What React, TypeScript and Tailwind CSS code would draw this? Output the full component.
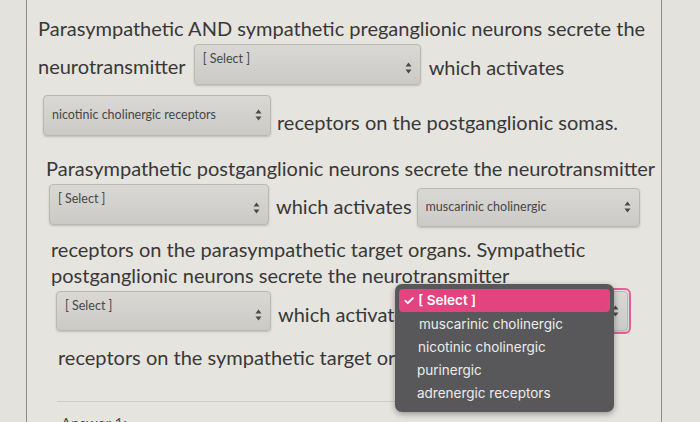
import React from "react";

const SANS = { fontFamily: "Lato, 'Open Sans', sans-serif" };

function Arrows() {
  return (
    <svg width="7" height="12" viewBox="0 0 7 12" className="shrink-0">
      <path d="M3.5 0.5 L6.5 4.5 L0.5 4.5 Z" fill="#4a4a4a" />
      <path d="M3.5 11.5 L6.5 7.5 L0.5 7.5 Z" fill="#4a4a4a" />
    </svg>
  );
}

type BoxProps = {
  label: string;
  w: string;
  h?: string;
  top?: boolean;
};

// grey native-looking select box
function SelectBox({ label, w, h = "h-[41px]", top = false }: BoxProps) {
  return (
    <div
      className={`${w} ${h} shrink-0 rounded-[4px] border border-[#b9b8b3] bg-gradient-to-b from-[#d9d8d4] to-[#cbcac6] shadow-[0_1px_2px_rgba(0,0,0,0.18)] flex justify-between pl-2 pr-2 ${
        top ? "items-start pt-[8px]" : "items-center"
      }`}
    >
      <span className="text-[12.5px] text-[#474747] leading-none">{label}</span>
      <span className={top ? "self-center" : ""}>
        <Arrows />
      </span>
    </div>
  );
}

export default function App() {
  return (
    <div
      className="w-[700px] h-[422px] overflow-hidden bg-[#e4e2dc] text-[#383838]"
      style={SANS}
    >
      <div className="ml-[26px] w-[636px] h-full border-l border-r border-[#8d8b86] bg-[#e6e4de]">
        <div className="flex flex-col text-[20px]">
          {/* line 1 */}
          <div className="ml-[11px] mt-[13px] h-[30px] leading-[30px] whitespace-nowrap">
            Parasympathetic AND sympathetic preganglionic neurons secrete the
          </div>

          {/* line 2 */}
          <div className="ml-[11px] h-[42px] flex items-center gap-[8px] whitespace-nowrap">
            <span className="mt-[4px]">neurotransmitter</span>
            <SelectBox label="[ Select ]" w="w-[227px]" top />
            <span className="mt-[6px]">which activates</span>
          </div>

          {/* line 3 */}
          <div className="ml-[16px] mt-[10px] h-[40px] flex items-center gap-[6px] whitespace-nowrap">
            <SelectBox label="nicotinic cholinergic receptors" w="w-[228px]" />
            <span className="mt-[14px]">receptors on the postganglionic somas.</span>
          </div>

          {/* line 4 */}
          <div className="ml-[19px] mt-[18px] h-[30px] leading-[30px] whitespace-nowrap">
            Parasympathetic postganglionic neurons secrete the neurotransmitter
          </div>

          {/* line 5 */}
          <div className="ml-[22px] h-[42px] flex items-center whitespace-nowrap">
            <SelectBox label="[ Select ]" w="w-[220px]" top />
            <span className="ml-[7px] mt-[4px]">which activates</span>
            <div className="ml-[5px] mt-[6px]">
              <SelectBox label="muscarinic cholinergic" w="w-[223px]" h="h-[39px]" />
            </div>
          </div>

          {/* lines 6-7 */}
          <div className="ml-[24px] mt-[11px] leading-[26px] whitespace-nowrap">
            <div>receptors on the parasympathetic target organs. Sympathetic</div>
            <div>postganglionic neurons secrete the neurotransmitter</div>
          </div>

          {/* line 8 */}
          <div className="ml-[29px] mt-[2px] h-[42px] flex items-center whitespace-nowrap">
            <SelectBox label="[ Select ]" w="w-[215px]" h="h-[40px]" top />
            <span className="ml-[7px] mt-[6px] w-[118px] overflow-hidden">which activates</span>
            <div className="relative ml-[14px]">
              <div className="rounded-[6px] border-[2px] border-[#e4609a] p-[1px]">
                <SelectBox label="" w="w-[215px]" h="h-[40px]" />
              </div>

              {/* open option list */}
              <div
                className="absolute left-[-15px] top-[-4px] w-[219px] h-[128px] rounded-[7px] bg-[#58585a] shadow-[0_2px_6px_rgba(0,0,0,0.35)] px-[4px] pt-[5px]"
                style={{ fontFamily: "Inter, Roboto, 'Liberation Sans', sans-serif" }}
              >
                <div className="h-[23px] rounded-[4px] bg-[#e2447f] flex items-center pl-[4px] text-[13.5px] font-semibold text-white">
                  ✓ [ Select ]
                </div>
                <div className="flex flex-col text-[13.5px] text-[#ececec] leading-[23px] pl-[20px] mt-[1px]">
                  <span>muscarinic cholinergic</span>
                  <span className="-ml-[1px]">nicotinic cholinergic</span>
                  <span className="-ml-[2px]">purinergic</span>
                  <span className="-ml-[2px]">adrenergic receptors</span>
                </div>
              </div>
            </div>
          </div>

          {/* line 9, runs under the open list */}
          <div className="ml-[31px] mt-[11px] h-[28px] w-[338px] overflow-hidden leading-[28px] whitespace-nowrap">
            receptors on the sympathetic target organs.
          </div>

          <div className="ml-[30px] mt-[30px] w-[420px] border-t border-[#cfcdc7]" />
          <div className="ml-[34px] mt-[10px] text-[15px] text-[#555]">Answer 1:</div>
        </div>
      </div>
    </div>
  );
}
